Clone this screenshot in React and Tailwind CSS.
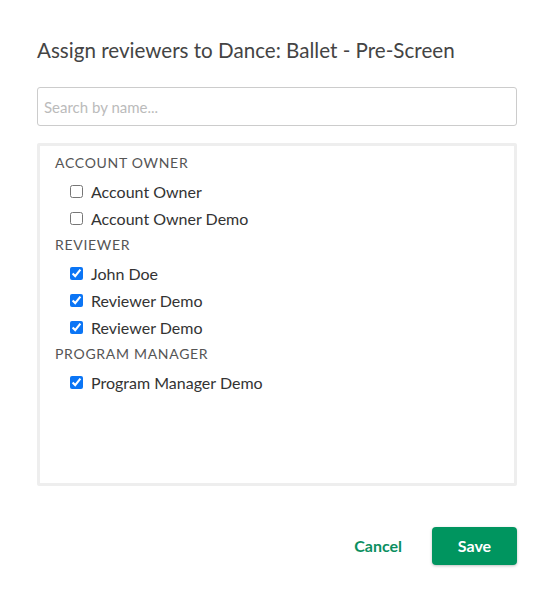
import React from "react";

const groups = [
  {
    label: "Account Owner",
    people: [
      { name: "Account Owner", checked: false },
      { name: "Account Owner Demo", checked: false },
    ],
  },
  {
    label: "Reviewer",
    people: [
      { name: "John Doe", checked: true },
      { name: "Reviewer Demo", checked: true },
      { name: "Reviewer Demo", checked: true },
    ],
  },
  {
    label: "Program Manager",
    people: [{ name: "Program Manager Demo", checked: true }],
  },
];

export default function App() {
  return (
    <div className="w-[554px] h-[601px] bg-white px-[37px] pt-[36px] font-['Lato',sans-serif]">
      <h2 className="text-[20.6px] leading-[28px] text-[#444]">
        Assign reviewers to Dance: Ballet - Pre-Screen
      </h2>

      <input
        type="text"
        placeholder="Search by name..."
        className="mt-[23px] w-full h-[39px] border border-[#ccc] rounded-[3px] px-[6px] text-[15px] text-[#333] placeholder:text-[#bbb] outline-none"
      />

      <div className="mt-[17px] h-[343px] border-[3px] border-[#eee] rounded-[2px] pl-[15px] pt-[7px]">
        {groups.map((g, gi) => (
          <div key={g.label}>
            <div
              className={`h-[20px] leading-[20px] text-[14px] uppercase tracking-[0.7px] text-[#555] mb-[5px] ${
                gi > 0 ? "mt-[3px]" : ""
              }`}
            >
              {g.label}
            </div>
            {g.people.map((p, i) => (
              <label
                key={i}
                className="flex items-center h-[27px] pl-[15px] gap-[8px] text-[16px] text-[#333]"
              >
                <input
                  type="checkbox"
                  defaultChecked={p.checked}
                  className="w-[13px] h-[13px] m-0 accent-[#0b75f5]"
                />
                {p.name}
              </label>
            ))}
          </div>
        ))}
      </div>

      <div className="mt-[41px] flex justify-end items-center gap-[30px]">
        <button className="text-[16px] font-bold text-[#0b8f5f]">Cancel</button>
        <button className="w-[85px] h-[38px] rounded-[4px] bg-[#00955f] text-white text-[16px] font-bold shadow-[0_1px_3px_rgba(0,0,0,0.25)]">
          Save
        </button>
      </div>
    </div>
  );
}
